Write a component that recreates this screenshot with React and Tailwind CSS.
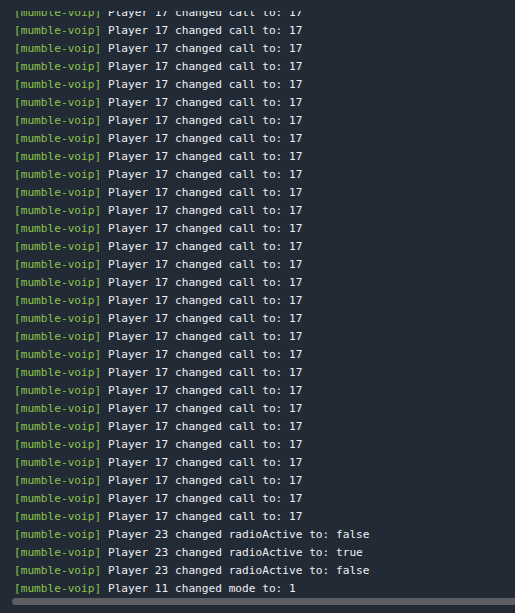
import React from 'react'

const lines = [
  ...Array.from({ length: 29 }, () => 'Player 17 changed call to: 17'),
  'Player 23 changed radioActive to: false',
  'Player 23 changed radioActive to: true',
  'Player 23 changed radioActive to: false',
  'Player 11 changed mode to: 1',
]

export default function App() {
  return (
    <div className="w-[515px] h-[613px] bg-[#222a36] overflow-hidden flex flex-col">
      <div className="h-[11px] shrink-0" />
      <div className="h-[586px] overflow-hidden shrink-0">
        <div
          className="-mt-[7px] pl-[14px] text-[11.15px] leading-[18px] whitespace-pre text-[#eef0f3]"
          style={{ fontFamily: '"DejaVu Sans Mono", "Liberation Mono", monospace' }}
        >
          {lines.map((t, i) => (
            <div key={i} className="h-[18px]">
              <span className="text-[#8bc34a]">[mumble-voip]</span> {t}
            </div>
          ))}
        </div>
      </div>
      <div className="pl-[12px] h-[7px] shrink-0 mt-[1px]">
        <div className="h-full bg-[#5b5f65] rounded-l-full" />
      </div>
    </div>
  )
}
